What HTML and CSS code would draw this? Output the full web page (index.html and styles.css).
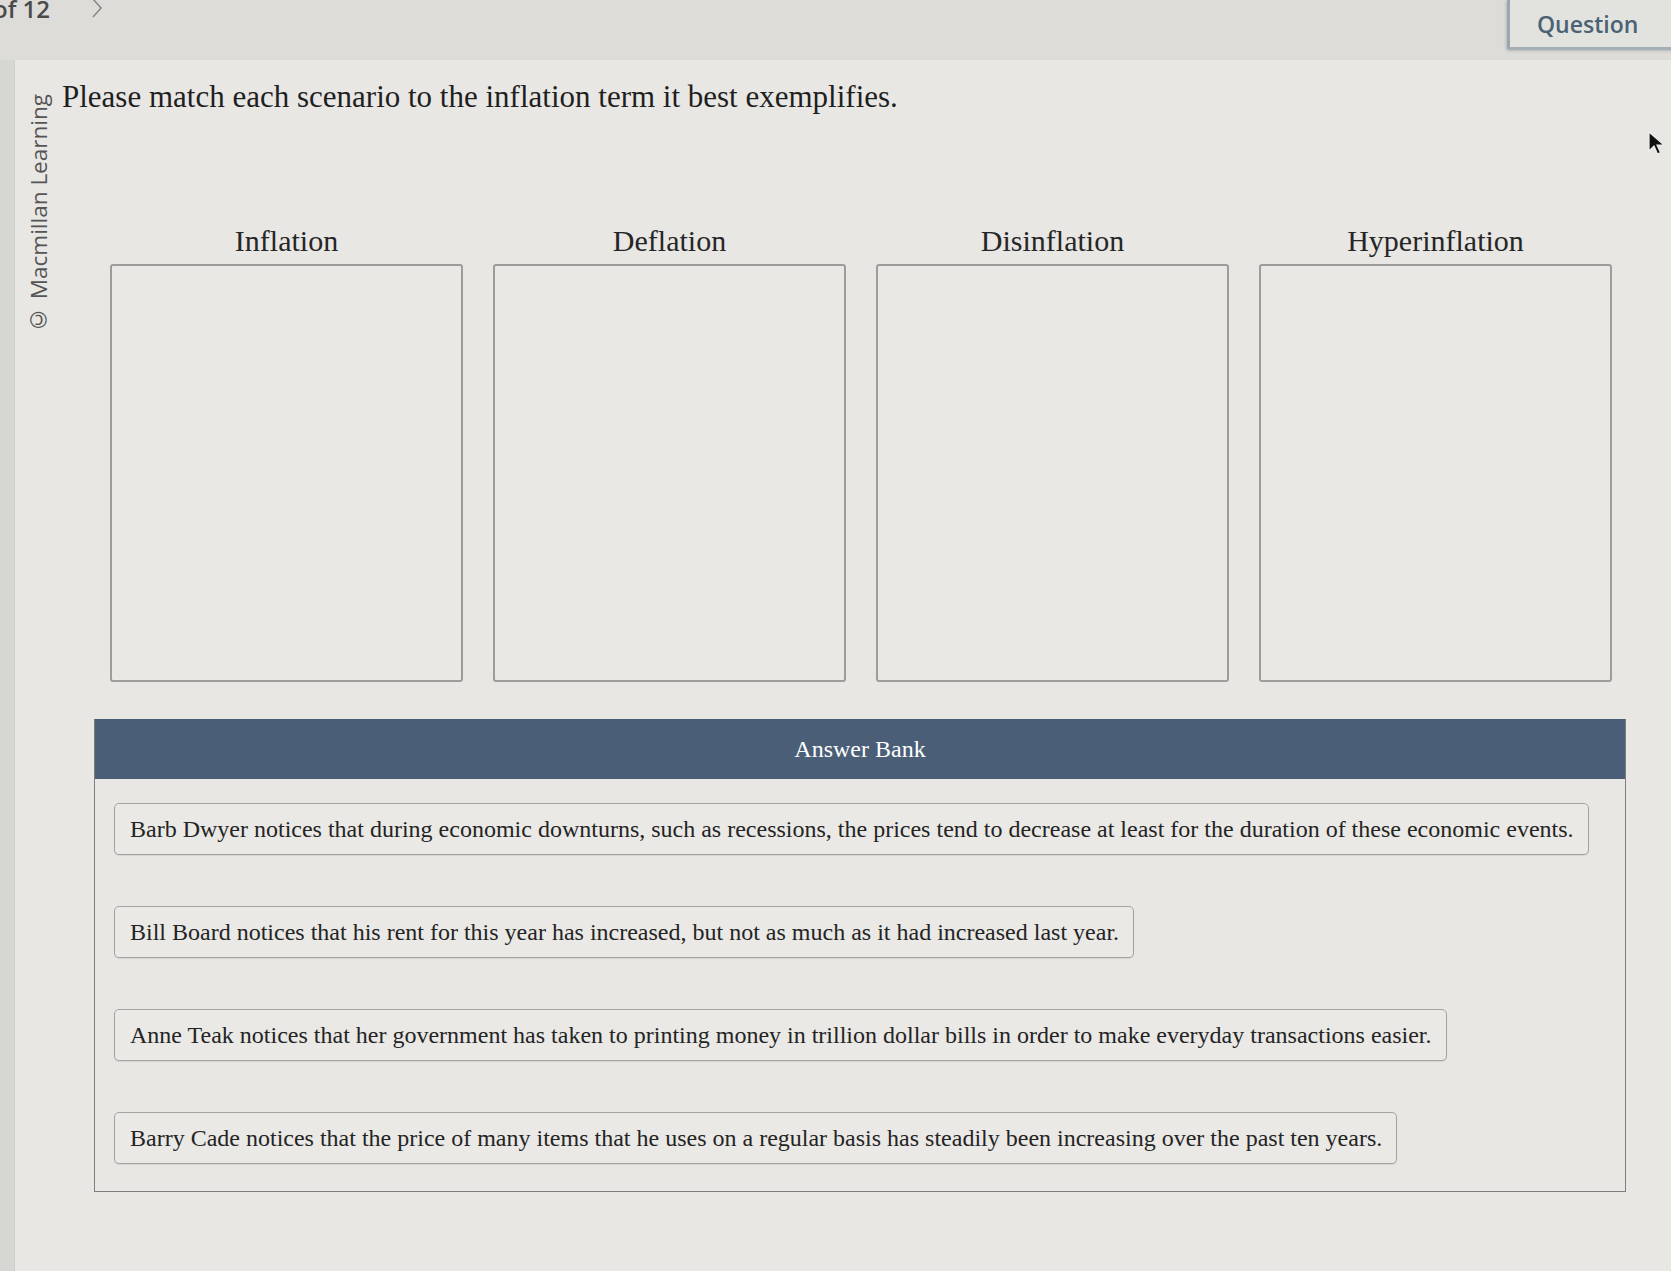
FILE: index.html
```html
<!DOCTYPE html>
<html lang="en">
<head>
  <meta charset="utf-8">
  <title>Matching question</title>
  <link rel="stylesheet" href="styles.css">
</head>
<body>
<div id="root">

  <div class="topbar">
    <div class="pager">
      <span class="pager-count">of 12</span>
      <svg class="pager-next" width="14" height="22" viewBox="0 0 14 22">
        <polyline points="3,1 11,10 3,19" fill="none" stroke="#8a8a8a" stroke-width="1.6"/>
      </svg>
    </div>
    <div class="question-tab">Question</div>
  </div>

  <div class="page">
    <div class="edge"></div>

    <div class="rail">
      <span class="credit">© Macmillan Learning</span>
    </div>

    <div class="content">
      <div class="prompt">Please match each scenario to the inflation term it best exemplifies.</div>

      <div class="targets">
        <div class="target">
          <div class="target-label">Inflation</div>
          <div class="dropbox"></div>
        </div>
        <div class="target">
          <div class="target-label">Deflation</div>
          <div class="dropbox"></div>
        </div>
        <div class="target">
          <div class="target-label">Disinflation</div>
          <div class="dropbox"></div>
        </div>
        <div class="target">
          <div class="target-label">Hyperinflation</div>
          <div class="dropbox"></div>
        </div>
      </div>

      <div class="bank">
        <div class="bank-head">Answer Bank</div>
        <div class="bank-body">
          <div class="chip">Barb Dwyer notices that during economic downturns, such as recessions, the prices tend to decrease at least for the duration of these economic events.</div>
          <div class="chip">Bill Board notices that his rent for this year has increased, but not as much as it had increased last year.</div>
          <div class="chip">Anne Teak notices that her government has taken to printing money in trillion dollar bills in order to make everyday transactions easier.</div>
          <div class="chip">Barry Cade notices that the price of many items that he uses on a regular basis has steadily been increasing over the past ten years.</div>
        </div>
      </div>
    </div>
  </div>

  <svg class="cursor" width="18" height="26" viewBox="0 0 18 26">
    <path d="M1,1 L1,20 L6,15 L9.5,23 L12.5,21.6 L9,14 L16,14 Z" fill="#111" stroke="#eee" stroke-width="1.2"/>
  </svg>

</div>
</body>
</html>
```

FILE: styles.css
```css
        html, body {
          margin: 0;
          padding: 0;
        }
        body {
          background-color: #e3e2df;
          font-family: "Liberation Serif", "Times New Roman", serif;
          color: #222222;
        }

        #root {
          position: relative;
          width: 1671px;
          height: 1271px;
          overflow: hidden;
        }

        /* top strip */
        .topbar {
          height: 60px;
          display: flex;
          justify-content: space-between;
          align-items: flex-start;
          background-color: #dddcd8;
        }
        .pager {
          display: flex;
          align-items: flex-start;
          gap: 40px;
          margin-left: -7px;
        }
        .pager-count {
          font-family: "Open Sans", "Liberation Sans", sans-serif;
          font-weight: 600;
          font-size: 24px;
          line-height: 26px;
          margin-top: -4px;
          color: #4a4a4a;
        }
        .pager-next {
          margin-top: -2px;
        }
        .question-tab {
          width: 174px;
          height: 50px;
          margin-right: -10px;
          padding-left: 27px;
          box-sizing: border-box;
          display: flex;
          align-items: center;
          font-family: "Open Sans", "Liberation Sans", sans-serif;
          font-weight: 600;
          font-size: 23px;
          color: #4a6274;
          background-color: #e2e2df;
          border-left: 3px solid #9aa7b0;
          border-bottom: 3px solid #a4afb6;
          border-radius: 0 0 0 3px;
          box-shadow: -1px 1px 3px rgba(60, 80, 95, 0.25);
        }

        /* body of the page */
        .page {
          display: flex;
          height: 1211px;
          background-color: #e8e7e4;
        }
        .edge {
          width: 14px;
          flex: none;
          background-color: #d6d6d3;
          border-right: 1px solid #cfcfcc;
        }
        .rail {
          width: 46px;
          flex: none;
          display: flex;
          justify-content: center;
          padding-top: 30px;
        }
        .credit {
          writing-mode: vertical-rl;
          transform: rotate(180deg);
          font-family: "Open Sans", "Liberation Sans", sans-serif;
          font-size: 22.5px;
          color: #555555;
          height: 246px;
        }

        .content {
          flex: 1;
          padding-top: 18px;
        }
        .prompt {
          font-size: 31px;
          line-height: 38px;
          margin-left: 1px;
          color: #1f1f1f;
        }

        .targets {
          display: grid;
          grid-template-columns: repeat(4, 353px);
          column-gap: 30px;
          margin-top: 108px;
          margin-left: 49px;
        }
        .target-label {
          text-align: center;
          font-size: 30px;
          line-height: 34px;
          color: #262626;
        }
        .dropbox {
          margin-top: 6px;
          height: 414px;
          border: 2px solid #9c9c9a;
          border-radius: 3px;
          background-color: #e9e8e5;
        }

        .bank {
          margin-top: 37px;
          margin-left: 33px;
          width: 1532px;
          border: 1px solid #7d7d7d;
          border-top: none;
          box-sizing: border-box;
        }
        .bank-head {
          height: 60px;
          display: flex;
          align-items: center;
          justify-content: center;
          background-color: #4a5e77;
          color: #ffffff;
          font-size: 24px;
        }
        .bank-body {
          display: flex;
          flex-direction: column;
          align-items: flex-start;
          gap: 51px;
          padding: 24px 19px 27px;
        }
        .chip {
          height: 52px;
          box-sizing: border-box;
          display: flex;
          align-items: center;
          padding: 0 14px 0 15px;
          font-size: 24px;
          color: #242424;
          border: 1.5px solid #a3a3a1;
          border-radius: 5px;
          background-color: #eae9e6;
          box-shadow: 0 1px 1px rgba(0, 0, 0, 0.08);
        }

        .cursor {
          position: absolute;
          left: 1648px;
          top: 131px;
        }
```
